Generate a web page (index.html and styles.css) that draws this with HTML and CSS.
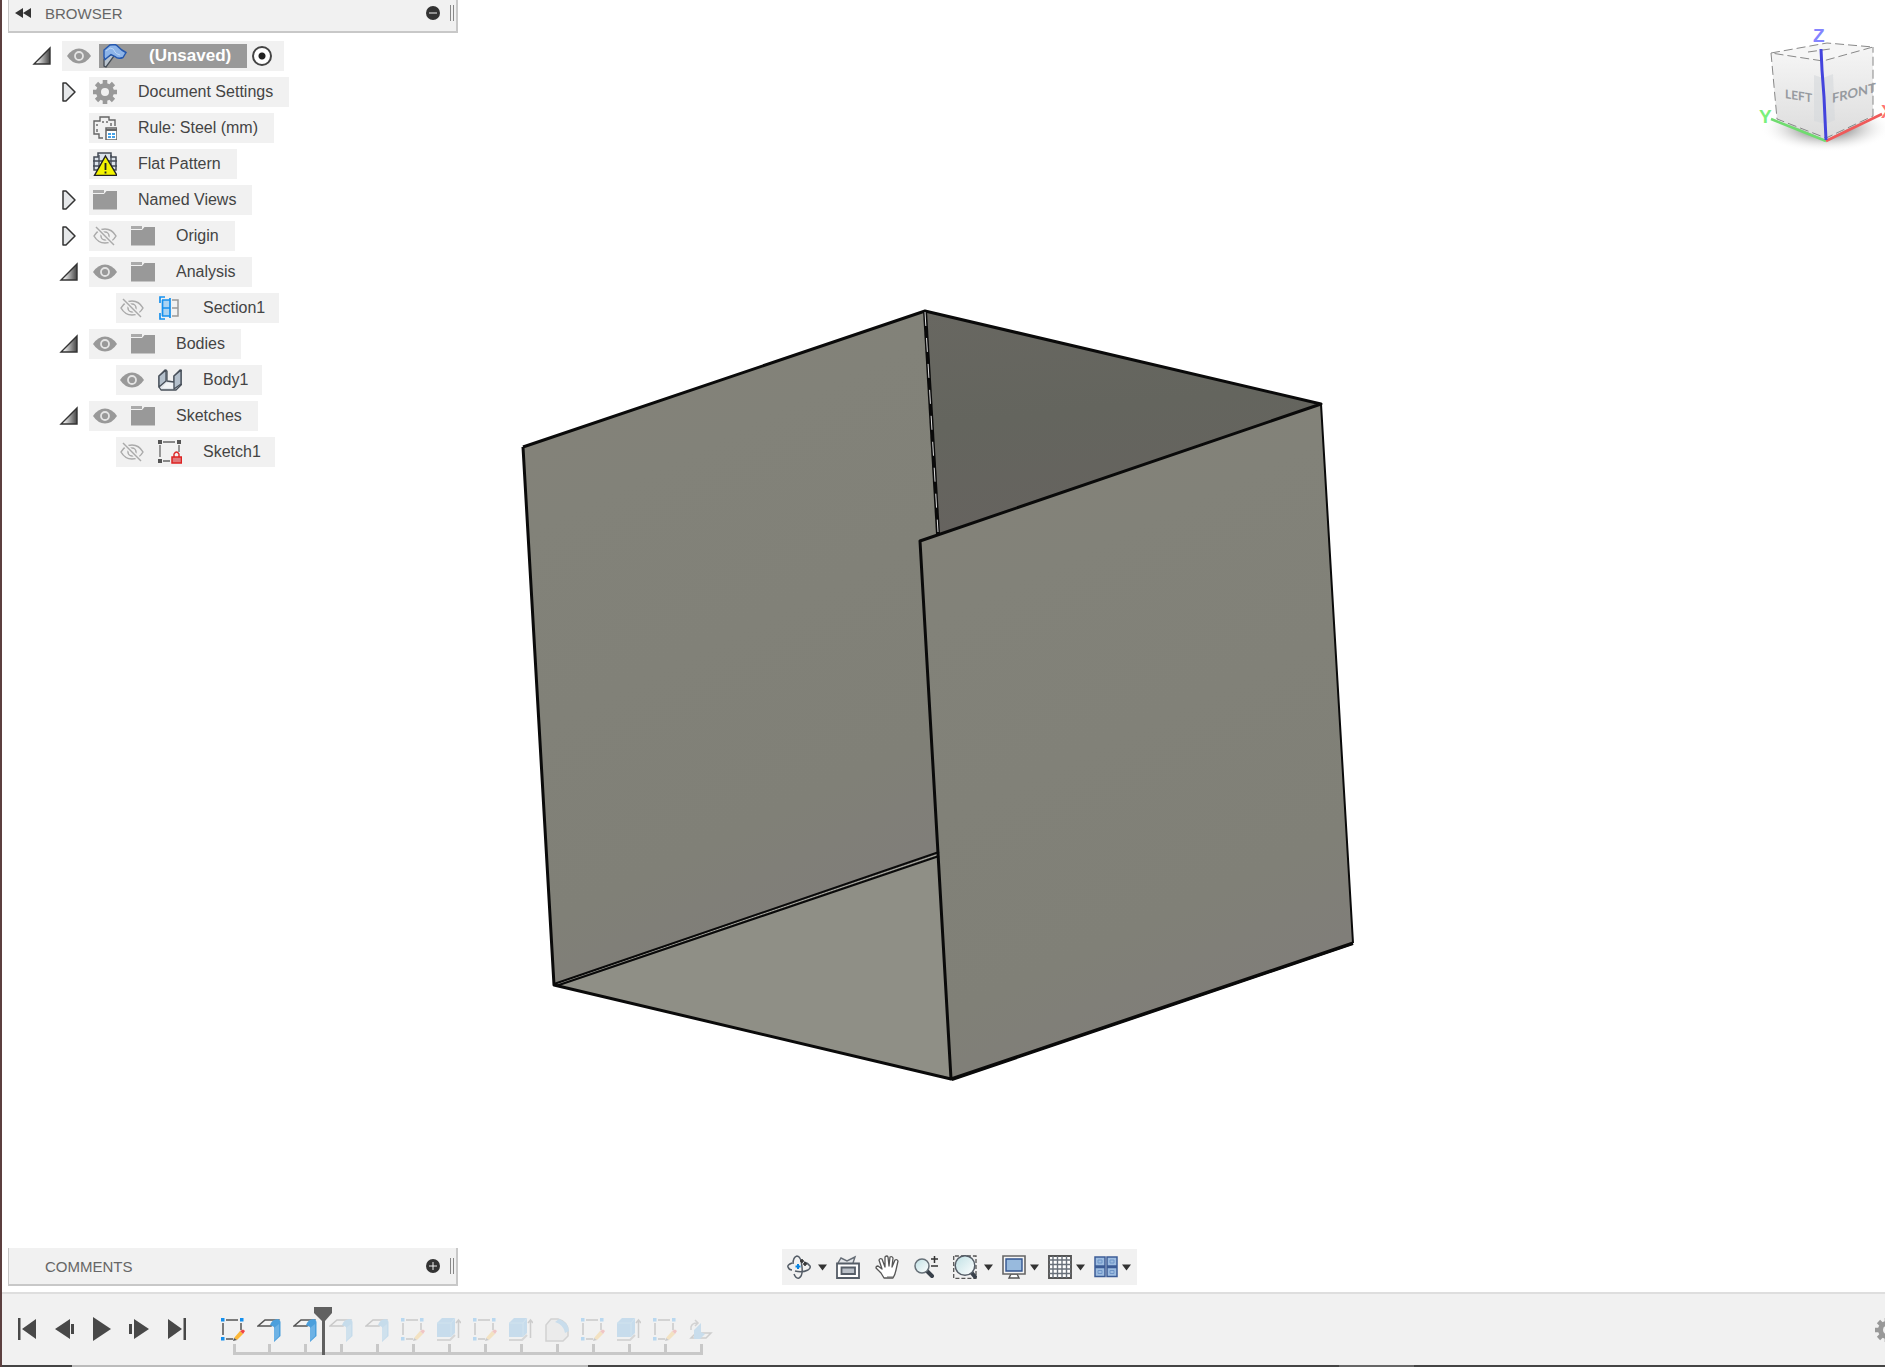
FILE: index.html
```html
<!DOCTYPE html>
<html lang="en">
<head>
  <meta charset="UTF-8">
  <meta name="viewport" content="width=device-width, initial-scale=1.0">
  <title>(Unsaved)</title>
  <link rel="stylesheet" href="styles.css">
</head>
<body>
  <!-- Icon sprite -->
  <svg class="sprite" aria-hidden="true">
    <defs>
      <linearGradient id="arrowFill" x1="0" y1="0" x2="1" y2="0">
        <stop offset="0.2" stop-color="#eee"/><stop offset="1" stop-color="#444"/>
      </linearGradient>
      <linearGradient id="glass" x1="0" y1="0" x2="1" y2="1">
        <stop offset="0" stop-color="#bfe0e4"/><stop offset="1" stop-color="#fff"/>
      </linearGradient>
    </defs>
    <symbol id="i-open" viewBox="0 0 20 20"><path d="M18 2v16H2z" fill="url(#arrowFill)" stroke="#333" stroke-width="1.4"/></symbol>
    <symbol id="i-closed" viewBox="0 0 20 20"><path d="M4 1h3l9 9-9 9H4z" fill="#e6e8ea" stroke="#333" stroke-width="1.5" stroke-linejoin="round"/></symbol>
    <symbol id="i-eye" viewBox="0 0 24 24"><path d="M0 12Q5 4.500 12 4.500T24 12Q19 19.500 12 19.500T0 12z" fill="#999"/><circle cx="12" cy="12" r="4" fill="#999" stroke="#e4e4e4" stroke-width="1.800"/></symbol>
    <symbol id="i-hidden" viewBox="0 0 24 24"><g fill="none" stroke="#aaa" stroke-width="1.500"><path d="M1 12Q5 5 12 5t11 7q-4 7-11 7T1 12z"/><circle cx="12" cy="12" r="4"/></g><path d="M3 3l18 18" stroke="#f1f1f1" stroke-width="4"/><path d="M3 3l18 18" stroke="#aaa" stroke-width="1.500"/></symbol>
    <symbol id="i-folder" viewBox="0 0 24 24"><path d="M0 2h11v3H0z" fill="#aaa"/><path d="M0 6h11l2.500-3H24v18.500H0z" fill="#999"/></symbol>
    <symbol id="i-gear" viewBox="0 0 24 24"><circle cx="12" cy="12" r="6.500" fill="none" stroke="#999" stroke-width="5"/><g stroke="#999" stroke-width="4.600"><path d="M12 0v5M12 19v5M0 12h5M19 12h5M3.500 3.500l3.500 3.500M17 17l3.500 3.500M3.500 20.500L7 17M17 7l3.500-3.500"/></g></symbol>
    <symbol id="i-component" viewBox="0 0 24 24"><path d="M1 15l5-3 4-2 1 2-8 11-2-1z" fill="#b9c4cf" stroke="#444b55" stroke-width="1.300"/><path d="M1 13V6l6-5 5-.500q2 .500 4 3t7 5l-3 5q-5 2-8-1l-4-2-6 5z" fill="#8db4e8" stroke="#2457ae" stroke-width="1.400"/><path d="M3 7l4-3q4 0 5 4 1 2 5 3" fill="none" stroke="#bcd6f6"/></symbol>
    <symbol id="i-rule" viewBox="0 0 24 24"><g fill="none" stroke="#666" stroke-width="1.400"><path d="M10 22H6v-4H1V5h6V1h9v3h6v6M4 8v2M4 13v3M10 5v2M14 5v2M18 7v3"/></g><path d="M13 12h11v12H13z" fill="#fff" stroke="#666" stroke-width="1.500"/><path d="M13 14h11" stroke="#666" stroke-width="2"/><path d="M15 18h3M15 21h3M19 18h3M19 21h3" stroke="#0a84e0" stroke-width="1.500"/></symbol>
    <symbol id="i-warn" viewBox="0 0 24 24"><path d="M1 5h4V1h13v4h5v13H1z" fill="#dce3ea" stroke="#444b55" stroke-width="1.500"/><path d="M0 9h24M0 14h24M6 3v14M18 3v14" stroke="#444b55" stroke-width="1.300"/><path d="M12.500 4L24 23.400H1.500z" fill="#f4f400" stroke="#222" stroke-width="1.400"/><path d="M12.500 11v7M12.500 19.500v2" stroke="#222" stroke-width="1.800"/></symbol>
    <symbol id="i-section" viewBox="0 0 24 24"><path d="M5 4h7v16H5z" fill="#a9d3f3"/><g fill="none" stroke="#1590ee" stroke-width="1.700"><path d="M7 1H2v6M2 17v6h5M4.500 4v16M12 2v20M4 4h8M4 12h8M4 20h8"/></g><path d="M14 4h6v16h-6M14 12h6" fill="none" stroke="#999" stroke-width="1.500"/></symbol>
    <symbol id="i-body" viewBox="0 0 24 24"><g stroke="#48505a" stroke-width="1.300" stroke-linejoin="round"><path d="M1 8l6-6 2 1v10l7 1V8l6-6 2 1v13l-6 6H3l-2-3z" fill="#dfe4e9"/><path d="M16 8l7-6v14l-7 5zM1 8l7-6v11l-7 6z" fill="#b4c0cc"/></g><path d="M4 20l4-5h7v5z" fill="#f2f4f6"/></symbol>
    <symbol id="i-locked" viewBox="0 0 24 24"><path d="M5 2h12M2 5v12M21 5v7M5 21h7" stroke="#666" stroke-width="1.300"/><path d="M0 0h4v4H0zM19 0h4v4h-4zM0 19h4v4H0z" fill="#555"/><path d="M16 17v-3q2.500-4 5 0v3" fill="none" stroke="#d22" stroke-width="1.400"/><path d="M14 17h9.500v6H14z" fill="#e0787b" stroke="#d22" stroke-width="1.500"/></symbol>

    <symbol id="i-orbit" viewBox="0 0 24 24"><g fill="none" stroke="#555d67" stroke-width="1.500"><path d="M5 8q-5 2-4 4 1 3 4 3M8 16q7 2 13-1 3-2 2-4-2-3-6-4"/><path d="M7 19q2 5 5 4 4-2 3-11Q14 1 10 1 6 2 6 9"/></g><path d="M11 9v5M8.500 11.500h5" stroke="#0a84e0" stroke-width="2"/><path d="M15 4v4M13 6h4M18 7v4M16 9h4" stroke="#333" stroke-width="1.600"/></symbol>
    <symbol id="i-look" viewBox="0 0 24 24"><path d="M2 8l3-5 6 3 8-4-2 6" fill="#e3e6e9" stroke="#666d76" stroke-width="1.400"/><path d="M1 8.500h22V23H1z" fill="#fff" stroke="#555d67" stroke-width="1.800"/><path d="M5.500 12.500h13.500v6.500H5.500z" fill="#b9bfc7" stroke="#555d67" stroke-width="1.800"/></symbol>
    <symbol id="i-hand" viewBox="0 0 24 24"><path d="M9 23L6 18l-5-5q0-2 2-2l4 3L4 5q1-2 3-1l3 8V2q2-2 3 0l1 9 1-9q2-1 3 1l-1 9 3-7q2-1 3 1l-2 9q-1 5-3 8z" fill="#fff" stroke="#555" stroke-width="1.300" stroke-linejoin="round"/><path d="M12 22h7" stroke="#666"/></symbol>
    <symbol id="i-zoom" viewBox="0 0 24 24"><path d="M13 16l5 5" stroke="#39414a" stroke-width="4" stroke-linecap="round"/><circle cx="8" cy="11" r="7" fill="url(#glass)" stroke="#667078" stroke-width="1.500"/><path d="M17 4h7M20.500 1v7M17 11h7" stroke="#333" stroke-width="1.500"/></symbol>
    <symbol id="i-fit" viewBox="0 0 24 24"><path d="M.700 1v22.300H23V1H.700z" fill="none" stroke="#555" stroke-width="1.300" stroke-dasharray="4 2"/><path d="M18 17l5 6" stroke="#39414a" stroke-width="4"/><circle cx="12" cy="10.500" r="9.800" fill="url(#glass)" stroke="#555d67" stroke-width="1.500"/></symbol>
    <symbol id="i-display" viewBox="0 0 24 24"><path d="M9 19h6l2 4H7z" fill="#fff" stroke="#555" stroke-width="1.400"/><path d="M1 1h22v18H1z" fill="#f5f5f5" stroke="#666" stroke-width="1.600"/><path d="M4 4h16v12H4z" fill="#98badd" stroke="#32548f" stroke-width="1.400"/></symbol>
    <symbol id="i-grid" viewBox="0 0 24 24"><path d="M1 1h22v22H1z" fill="#fff" stroke="#555" stroke-width="1.900"/><path d="M5 1v22M9.500 1v22M14 1v22M18.500 1v22M1 5h22M1 9.500h22M1 14h22M1 18.500h22" stroke="#68707a" stroke-width="1.400"/></symbol>
    <symbol id="i-views" viewBox="0 0 24 24"><g fill="#9dbce0" stroke="#3c5c96" stroke-width="1.500"><path d="M1 2h10v9H1zM13 2h10v9H13zM1 12.500h10v9H1zM13 12.500h10v9H13z"/></g><g fill="none" stroke="#6f95c8"><path d="M4 5h4v3H4zM16 5h4v3h-4zM4 15.500h4v3H4zM16 15.500h4v3h-4z"/></g></symbol>
    <symbol id="i-caret" viewBox="0 0 9 24"><path d="M0 9.500h9l-4.500 6z" fill="#333"/></symbol>

    <symbol id="i-first" viewBox="0 0 24 24"><path d="M3 1h2.500v22H3zM21 2v20L7 12z" fill="#484848"/></symbol>
    <symbol id="i-prev" viewBox="0 0 24 24"><path d="M17 2v20L2 12zM18 7h3v10h-3z" fill="#484848"/></symbol>
    <symbol id="i-play" viewBox="0 0 24 24"><path d="M2 0l18 12L2 24z" fill="#484848"/></symbol>
    <symbol id="i-next" viewBox="0 0 24 24"><path d="M5 2v20l15-10zM0 7h3v10H0z" fill="#484848"/></symbol>
    <symbol id="i-last" viewBox="0 0 24 24"><path d="M16.500 1H19v22h-2.500zM1 2v20l14-10z" fill="#484848"/></symbol>

    <symbol id="i-sketch" viewBox="0 0 24 24"><path d="M5 2h12M2 5v12M20 5v7M5 21h7" stroke="#555" stroke-width="1.500"/><path d="M0 0h3.500v3.500H0zM19 0h3.500v3.500H19zM0 19h3.500v3.500H0z" fill="#1590ee"/><path d="M13 20l6-7 3 3-6 6z" fill="#fbb738"/><path d="M19 13l3-1.500 2 1.500-2 3z" fill="#f04444"/><path d="M12 23l1-3 3 2z" fill="#555"/></symbol>
    <symbol id="i-flange" viewBox="0 0 24 24"><path d="M1 8l7-6h13l-7 6z" fill="#f4f4f4" stroke="#555" stroke-width="1.600"/><path d="M13 7q2-6 8-6 3 1 2.500 5v12L17 24V9z" fill="#4b9fdc"/><path d="M17 10l5-4v12l-5 5z" fill="#6db2e5"/></symbol>
    <symbol id="i-extrude" viewBox="0 0 24 24"><path d="M0 22h13l5-5" fill="none" stroke="#888" stroke-width="2"/><path d="M0 5l5-5h13v15l-4 4H0z" fill="#4da2df"/><path d="M0 5h14v14M14 5l4-5" fill="none" stroke="#79bbe9"/><path d="M21.500 20V2M19 5l2.500-3L24 5" fill="none" stroke="#666" stroke-width="1.500"/></symbol>
    <symbol id="i-fillet" viewBox="0 0 24 24"><path d="M1 23V7l5-6h7q10 3 10 12v5l-5 5z" fill="#ddd" stroke="#777" stroke-width="1.500"/><path d="M10 4l4-3q9 3 10 12l-4 2Q19 7 10 4z" fill="#55a5df"/></symbol>
    <symbol id="i-unfold" viewBox="0 0 24 24"><path d="M2 12V9q1-4 6-4M6 2l3 3-3 3" fill="none" stroke="#777" stroke-width="1.500"/><path d="M2 20l5-5h15l-5 5z" fill="#eee" stroke="#666" stroke-width="1.500"/><path d="M5 12l7-7v9l4 2-5 5H5z" fill="#55a5df"/></symbol>
  </svg>

  <main class="viewport">
    <!-- Sheet metal body -->
    <svg class="model" viewBox="2 0 1883 1292" role="img" aria-label="Body1">
      <defs>
        <linearGradient id="faceLeft" x1="0" y1="0" x2="0.3" y2="1">
          <stop offset="0" stop-color="#858279"/><stop offset="0.3" stop-color="#828279"/><stop offset="0.85" stop-color="#808077"/><stop offset="1" stop-color="#807e79"/>
        </linearGradient>
        <linearGradient id="faceBack" x1="0" y1="0" x2="0.2" y2="1">
          <stop offset="0" stop-color="#686761"/><stop offset="0.5" stop-color="#64655e"/><stop offset="1" stop-color="#66635f"/>
        </linearGradient>
      </defs>
      <path d="M523 447L925 311 938 534 939 854 554 985z" fill="url(#faceLeft)"/>
      <path d="M925 311L1321 404 938 534z" fill="url(#faceBack)"/>
      <path d="M554 985L939 854 951 1079z" fill="#8f8f86"/>
      <path d="M920 541L1321 404 1353 943 951 1079z" fill="url(#faceLeft)"/>
      <g class="edges">
        <path d="M523 447L925 311 1321 404 920 541 951 1079 1353 943M523 447L554 985 951 1079"/>
        <path d="M925 311L938 534" class="seam-edge"/>
        <path d="M925 312L938 532" class="seam"/>
        <path d="M1321 404L1353 943M554 984L939 852M556 986L939 856M952 1080L1353 944" class="thin"/>
      </g>
    </svg>

    <aside class="browser">
      <div class="panel panel-top">
        <button class="collapse" aria-label="Collapse browser"><svg viewBox="0 0 16 10"><path d="M8 0v10L0 5zM16 0v10L8 5z"/></svg></button>
        <span class="panel-title">BROWSER</span>
        <button class="round" aria-label="Hide browser"><svg viewBox="0 0 14 14"><circle cx="7" cy="7" r="7"/><path d="M3 7h8"/></svg></button>
        <span class="grip"></span>
      </div>
      <ul class="tree">
        <li>
          <button class="toggle" aria-label="Collapse"><svg><use href="#i-open"/></svg></button>
          <div class="node root">
            <svg><use href="#i-eye"/></svg>
            <label class="selected" for="active"><svg><use href="#i-component"/></svg>(Unsaved)</label>
            <input type="radio" id="active" name="active" checked>
          </div>
        </li>
        <li class="l1">
          <button class="toggle" aria-label="Expand"><svg><use href="#i-closed"/></svg></button>
          <div class="node"><svg><use href="#i-gear"/></svg><span>Document Settings</span></div>
        </li>
        <li class="l1">
          <span class="toggle"></span>
          <div class="node"><svg><use href="#i-rule"/></svg><span>Rule: Steel (mm)</span></div>
        </li>
        <li class="l1">
          <span class="toggle"></span>
          <div class="node"><svg><use href="#i-warn"/></svg><span>Flat Pattern</span></div>
        </li>
        <li class="l1">
          <button class="toggle" aria-label="Expand"><svg><use href="#i-closed"/></svg></button>
          <div class="node"><svg><use href="#i-folder"/></svg><span>Named Views</span></div>
        </li>
        <li class="l1">
          <button class="toggle" aria-label="Expand"><svg><use href="#i-closed"/></svg></button>
          <div class="node"><svg><use href="#i-hidden"/></svg><svg><use href="#i-folder"/></svg><span>Origin</span></div>
        </li>
        <li class="l1">
          <button class="toggle" aria-label="Collapse"><svg><use href="#i-open"/></svg></button>
          <div class="node"><svg><use href="#i-eye"/></svg><svg><use href="#i-folder"/></svg><span>Analysis</span></div>
        </li>
        <li class="l2">
          <span class="toggle"></span>
          <div class="node"><svg><use href="#i-hidden"/></svg><svg><use href="#i-section"/></svg><span>Section1</span></div>
        </li>
        <li class="l1">
          <button class="toggle" aria-label="Collapse"><svg><use href="#i-open"/></svg></button>
          <div class="node"><svg><use href="#i-eye"/></svg><svg><use href="#i-folder"/></svg><span>Bodies</span></div>
        </li>
        <li class="l2">
          <span class="toggle"></span>
          <div class="node"><svg><use href="#i-eye"/></svg><svg><use href="#i-body"/></svg><span>Body1</span></div>
        </li>
        <li class="l1">
          <button class="toggle" aria-label="Collapse"><svg><use href="#i-open"/></svg></button>
          <div class="node"><svg><use href="#i-eye"/></svg><svg><use href="#i-folder"/></svg><span>Sketches</span></div>
        </li>
        <li class="l2">
          <span class="toggle"></span>
          <div class="node"><svg><use href="#i-hidden"/></svg><svg><use href="#i-locked"/></svg><span>Sketch1</span></div>
        </li>
      </ul>
    </aside>

    <!-- View cube -->
    <svg class="viewcube" viewBox="1745 15 140 145" role="img" aria-label="View cube">
      <defs>
        <radialGradient id="cubeShadow"><stop offset="0.3" stop-color="#999"/><stop offset="1" stop-color="#fff" stop-opacity="0"/></radialGradient>
        <linearGradient id="cubeFace" x1="0" y1="0" x2="0" y2="1"><stop offset="0" stop-color="#f5f5f5"/><stop offset="1" stop-color="#dcdcdc"/></linearGradient>
      </defs>
      <ellipse cx="1826" cy="128" rx="66" ry="24" fill="url(#cubeShadow)"/>
      <path d="M1771 53L1827 43 1873 47 1823 61z" fill="#f6f6f6"/>
      <path d="M1771 53L1823 61 1826 140 1777 119z" fill="url(#cubeFace)"/>
      <path d="M1823 61L1873 47V116L1826 140z" fill="url(#cubeFace)"/>
      <path d="M1814 75l9 3 10-4 2 46-9 4-12-3z" fill="#d5d8dc" opacity="0.6"/>
      <path d="M1771 53L1827 43 1873 47 1823 61zM1771 53L1777 119 1826 138 1873 116V47M1808 52l22-3" class="cube-edge"/>
      <text x="1785" y="98" class="face-text left">LEFT</text>
      <text x="1832" y="103" class="face-text front">FRONT</text>
      <path d="M1771 119L1826 141" stroke="#6fdc6f" stroke-width="2.500"/>
      <path d="M1826 141L1882 114" stroke="#ef5a5a" stroke-width="2.500"/>
      <path d="M1821 49L1822 70 1824 97 1826 140" stroke="#4444dd" stroke-width="3" fill="none"/>
      <text x="1813" y="42" class="axis" fill="#8484ff">Z</text>
      <text x="1759" y="123" class="axis" fill="#7bf07b">Y</text>
      <text x="1881" y="118" class="axis" fill="#ff7474">X</text>
    </svg>

    <footer class="bottom-row">
      <div class="panel">
        <span class="panel-title">COMMENTS</span>
        <button class="round" aria-label="Show comments"><svg viewBox="0 0 14 14"><circle cx="7" cy="7" r="7"/><path d="M3 7h8M7 3v8"/></svg></button>
        <span class="grip"></span>
      </div>
      <nav class="navbar">
        <button class="wide" aria-label="Orbit"><svg><use href="#i-orbit"/></svg><svg class="caret"><use href="#i-caret"/></svg></button>
        <button class="single" aria-label="Look at"><svg><use href="#i-look"/></svg></button>
        <button class="single" aria-label="Pan"><svg><use href="#i-hand"/></svg></button>
        <button class="single" aria-label="Zoom"><svg><use href="#i-zoom"/></svg></button>
        <button class="wide" aria-label="Fit"><svg><use href="#i-fit"/></svg><svg class="caret"><use href="#i-caret"/></svg></button>
        <button aria-label="Display settings"><svg><use href="#i-display"/></svg><svg class="caret"><use href="#i-caret"/></svg></button>
        <button aria-label="Grid and snaps"><svg><use href="#i-grid"/></svg><svg class="caret"><use href="#i-caret"/></svg></button>
        <button aria-label="Viewports"><svg><use href="#i-views"/></svg><svg class="caret"><use href="#i-caret"/></svg></button>
      </nav>
    </footer>
  </main>

  <section class="timeline">
    <div class="playback">
      <button aria-label="Go to start"><svg><use href="#i-first"/></svg></button>
      <button aria-label="Step back"><svg><use href="#i-prev"/></svg></button>
      <button aria-label="Play"><svg><use href="#i-play"/></svg></button>
      <button aria-label="Step forward"><svg><use href="#i-next"/></svg></button>
      <button aria-label="Go to end"><svg><use href="#i-last"/></svg></button>
    </div>
    <div class="features">
      <button aria-label="Sketch"><svg><use href="#i-sketch"/></svg></button>
      <button aria-label="Flange"><svg><use href="#i-flange"/></svg></button>
      <button aria-label="Flange"><svg><use href="#i-flange"/></svg></button>
      <button class="off" aria-label="Flange"><svg><use href="#i-flange"/></svg></button>
      <button class="off" aria-label="Flange"><svg><use href="#i-flange"/></svg></button>
      <button class="off" aria-label="Sketch"><svg><use href="#i-sketch"/></svg></button>
      <button class="off" aria-label="Extrude"><svg><use href="#i-extrude"/></svg></button>
      <button class="off" aria-label="Sketch"><svg><use href="#i-sketch"/></svg></button>
      <button class="off" aria-label="Extrude"><svg><use href="#i-extrude"/></svg></button>
      <button class="off" aria-label="Fillet"><svg><use href="#i-fillet"/></svg></button>
      <button class="off" aria-label="Sketch"><svg><use href="#i-sketch"/></svg></button>
      <button class="off" aria-label="Extrude"><svg><use href="#i-extrude"/></svg></button>
      <button class="off" aria-label="Sketch"><svg><use href="#i-sketch"/></svg></button>
      <button class="off" aria-label="Unfold"><svg><use href="#i-unfold"/></svg></button>
      <svg class="marker" viewBox="0 0 18 48"><path d="M0 0h18v6l-7 8v34H8V14L0 6z" fill="#606060"/></svg>
    </div>
    <button class="settings" aria-label="Timeline settings"><svg><use href="#i-gear"/></svg></button>
  </section>
  <div class="taskbar"></div>
</body>
</html>
```
FILE: styles.css
```css
* {
  box-sizing: border-box;
}
body {
  margin: 0;
  min-height: 100vh;
  display: flex;
  flex-direction: column;
  overflow: hidden;
  border-left: 2px solid #5c3f3f;
  background: #fff;
  color: #444;
  font-family: "Liberation Sans", Arial, sans-serif;
  font-size: 16px;
}
button {
  padding: 0;
  border: none;
  background: none;
  cursor: pointer;
}
svg {
  display: block;
  flex: none;
}
.sprite {
  position: absolute;
  width: 0;
  height: 0;
}

/* Canvas */
.viewport {
  position: relative;
  flex: 1;
  display: grid;
  grid-template-columns: 1fr auto;
  grid-template-rows: 1fr auto;
}
.model {
  position: absolute;
  inset: 0;
  width: 100%;
  height: 100%;
}
.edges path {
  fill: none;
  stroke: #0a0a0a;
  stroke-width: 3;
  stroke-linejoin: round;
}
.edges .thin {
  stroke-width: 2;
}
.edges .seam-edge {
  stroke-width: 4;
}
.edges .seam {
  stroke: #ddd;
  stroke-width: 1;
  stroke-dasharray: 14 12;
}
.browser,
.bottom-row,
.viewcube {
  position: relative;
}

/* Panels */
.panel {
  display: flex;
  align-items: center;
  width: 450px;
  height: 38px;
  padding: 0 2px 0 36px;
  background: #f1f1f1;
  border: solid #c8c8c8;
  border-width: 0 2px 2px 1px;
  color: #666;
  font-size: 15px;
}
.panel-top {
  height: 33px;
  padding-left: 6px;
  padding-bottom: 5px;
}
.collapse {
  width: 30px;
}
.collapse svg {
  width: 16px;
  height: 10px;
  fill: #333;
}
.panel-title {
  flex: 1;
}
.round svg {
  width: 14px;
  height: 14px;
  fill: #333;
  stroke: #f1f1f1;
}
.round circle {
  stroke: none;
}
.grip {
  width: 4px;
  height: 16px;
  margin-left: 10px;
  border: solid #888;
  border-width: 0 1px;
}
.browser {
  padding-left: 6px;
}

/* Tree */
.tree {
  list-style: none;
  margin: 8px 0 0;
  padding: 0 0 0 24px;
}
.tree li {
  display: flex;
  align-items: center;
  gap: 10px;
  margin-bottom: 6px;
}
.tree .l1 {
  padding-left: 27px;
}
.tree .l2 {
  padding-left: 54px;
}
.toggle,
.toggle svg {
  width: 20px;
  height: 20px;
}
.node {
  display: flex;
  align-items: center;
  gap: 14px;
  height: 30px;
  padding: 0 16px 0 4px;
  background: #f1f1f1;
}
.l2 .node {
  padding-right: 14px;
}
.node svg {
  width: 24px;
  height: 24px;
}
.node span {
  margin-left: 7px;
}
.root {
  gap: 8px;
  padding: 0 12px 0 5px;
}
.selected {
  display: flex;
  align-items: center;
  gap: 22px;
  width: 148px;
  height: 24px;
  padding-left: 4px;
  background: #999;
  color: #fff;
  font-size: 17px;
  font-weight: bold;
}
.root input {
  appearance: none;
  width: 20px;
  height: 20px;
  margin: 0 0 0 -3px;
  border: 2px solid #444;
  border-radius: 50%;
  background: radial-gradient(circle, #222 3px, #fff 4px);
}

/* View cube */
.viewcube {
  width: 140px;
  height: 145px;
  margin-top: 15px;
}
.cube-edge {
  fill: none;
  stroke: #888;
  stroke-width: 1;
  stroke-dasharray: 9 4;
}
.face-text {
  fill: #969a9f;
  font-family: Lato, sans-serif;
  font-weight: bold;
  transform-box: fill-box;
}
.left {
  font-size: 12px;
  transform: skewY(9deg);
}
.front {
  font-size: 13px;
  transform: skewY(-14deg);
}
.axis {
  font-size: 19px;
  font-weight: bold;
}

/* Comments and navigation bar */
.bottom-row {
  grid-column: 1 / -1;
  display: flex;
  align-items: center;
  gap: 324px;
  padding: 0 0 6px 6px;
}
.navbar {
  display: flex;
  align-items: center;
  gap: 9px;
  height: 36px;
  padding: 0 6px 0 5px;
  background: #f1f1f1;
}
.navbar button {
  display: flex;
  gap: 4px;
}
.navbar .wide {
  gap: 7px;
}
.navbar .single {
  padding-right: 6px;
}
.navbar svg {
  width: 24px;
  height: 24px;
}
.navbar .caret {
  width: 9px;
}

/* Timeline */
.timeline {
  display: flex;
  align-items: flex-start;
  height: 73px;
  padding-top: 13px;
  overflow: hidden;
  background: #f1f1f1;
  border-top: 2px solid #dedede;
}
.playback {
  display: flex;
  gap: 14px;
  padding: 10px 0 0 13px;
}
.playback svg,
.features button svg,
.settings svg {
  width: 24px;
  height: 24px;
}
.features {
  position: relative;
  display: flex;
  margin: 8px 0 0 30px;
}
.features button {
  width: 36px;
  height: 40px;
  padding-bottom: 10px;
  background:
    linear-gradient(#c8c8c8, #c8c8c8) 11px 29px / 3px 11px no-repeat,
    linear-gradient(#c8c8c8, #c8c8c8) 0 37px / 36px 3px no-repeat;
}
.features button:first-child {
  background-position: 12px 29px, 12px 37px;
}
.features button:last-of-type {
  background-size: 3px 11px, 14px 3px;
}
.features .off svg {
  opacity: 0.25;
}
.marker {
  position: absolute;
  left: 93px;
  top: -8px;
  width: 18px;
  height: 48px;
}
.settings {
  margin: 11px -14px 0 auto;
}
.taskbar {
  height: 2px;
  background: linear-gradient(90deg, #444 70px, #bbb 70px 586px, #444 586px 71%, #666 71% 75%, #444 75%);
}
```
